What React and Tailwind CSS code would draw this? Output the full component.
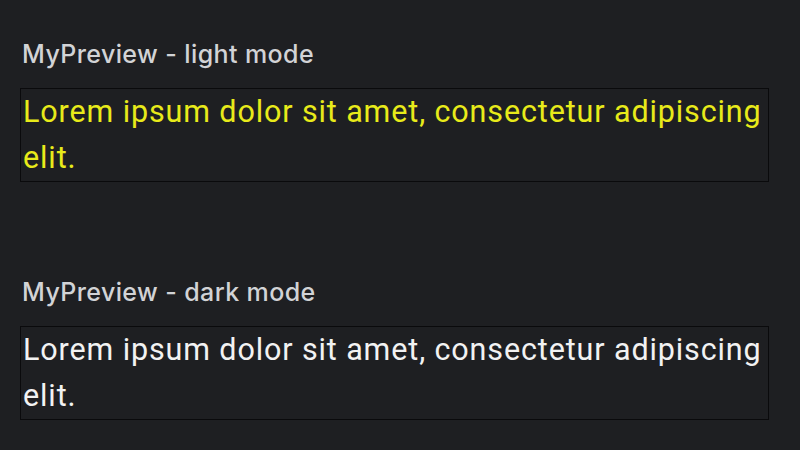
export default function App() {
  const Section = ({ title, color }) => (
    <div className="flex flex-col">
      <div className="text-[25px] leading-[28px] font-medium tracking-[0.4px] text-[#d2d3d6] pl-[2px]" style={{ fontFamily: "Inter, 'Noto Sans', sans-serif" }}>
        {title}
      </div>
      <div className="mt-[20px] w-[749px] h-[94px] border-[1.5px] border-[#0a0a0c] px-[2px]">
        <p className={`text-[30.5px] leading-[46px] tracking-[0.88px] ${color}`} style={{ fontFamily: "Roboto, sans-serif" }}>
          Lorem ipsum dolor sit amet, consectetur adipiscing elit.
        </p>
      </div>
    </div>
  );
  return (
    <div className="w-[800px] h-[450px] bg-[#1e1f22] pl-[20px] pt-[40px] flex flex-col gap-[96px] overflow-hidden">
      <Section title="MyPreview - light mode" color="text-[#e8ea1a]" />
      <Section title="MyPreview - dark mode" color="text-[#f2f2f2]" />
    </div>
  );
}
